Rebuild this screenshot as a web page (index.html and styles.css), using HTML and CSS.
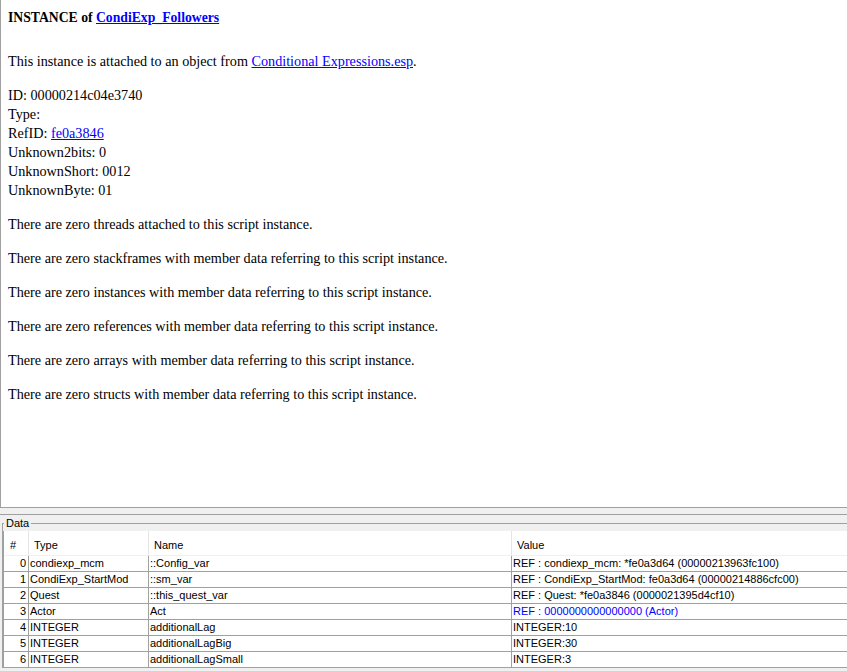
FILE: index.html
```html
<!DOCTYPE html>
<html>
<head>
<meta charset="utf-8">
<title>Instance</title>
<link rel="stylesheet" href="styles.css">
</head>
<body>
<div class="doc">
  <h4 class="title">INSTANCE of <a href="#">CondiExp_Followers</a></h4>
  <p>This instance is attached to an object from <a href="#">Conditional Expressions.esp</a>.</p>
  <p>ID: 00000214c04e3740<br>Type: <br>RefID: <a href="#">fe0a3846</a><br>Unknown2bits: 0<br>UnknownShort: 0012<br>UnknownByte: 01</p>
  <p>There are zero threads attached to this script instance.</p>
  <p>There are zero stackframes with member data referring to this script instance.</p>
  <p>There are zero instances with member data referring to this script instance.</p>
  <p>There are zero references with member data referring to this script instance.</p>
  <p>There are zero arrays with member data referring to this script instance.</p>
  <p>There are zero structs with member data referring to this script instance.</p>
</div>
<div class="split"></div>
<div class="panel">
  <fieldset class="group">
    <legend class="group-label">Data</legend>
    <div class="list">
      <div class="hcell num-h">#</div>
      <div class="hcell">Type</div>
      <div class="hcell">Name</div>
      <div class="hcell last">Value</div>

      <div class="cell num">0</div><div class="cell">condiexp_mcm</div><div class="cell">::Config_var</div><div class="cell last">REF : condiexp_mcm: *fe0a3d64 (00000213963fc100)</div>
      <div class="cell num">1</div><div class="cell">CondiExp_StartMod</div><div class="cell">::sm_var</div><div class="cell last">REF : CondiExp_StartMod: fe0a3d64 (00000214886cfc00)</div>
      <div class="cell num">2</div><div class="cell">Quest</div><div class="cell">::this_quest_var</div><div class="cell last">REF : Quest: *fe0a3846 (0000021395d4cf10)</div>
      <div class="cell num">3</div><div class="cell">Actor</div><div class="cell">Act</div><div class="cell last null">REF : 0000000000000000 (Actor)</div>
      <div class="cell num">4</div><div class="cell">INTEGER</div><div class="cell">additionalLag</div><div class="cell last">INTEGER:10</div>
      <div class="cell num">5</div><div class="cell">INTEGER</div><div class="cell">additionalLagBig</div><div class="cell last">INTEGER:30</div>
      <div class="cell num">6</div><div class="cell">INTEGER</div><div class="cell">additionalLagSmall</div><div class="cell last">INTEGER:3</div>
    </div>
  </fieldset>
</div>
</body>
</html>
```
FILE: styles.css
```css
html, body {
  margin: 0;
  padding: 0;
}
body {
  width: 847px;
  height: 671px;
  overflow: hidden;
  background: #f0f0f0;
  font-family: "Liberation Serif", "Times New Roman", serif;
}
.doc {
  box-sizing: border-box;
  height: 508px;
  background: #ffffff;
  border-left: 1px solid #a0a0a0;
  border-bottom: 1px solid #a0a0a0;
  padding: 8px 7px 0;
  font-size: 14.2px;
  line-height: 19px;
  color: #000;
  overflow: hidden;
}
.title {
  margin: 0 0 25px;
  font-size: 13.7px;
  font-weight: bold;
}
.doc p {
  margin: 0 0 15px;
}
.doc a {
  color: #0000ff;
  text-decoration: underline;
}
.split {
  height: 6px;
  border-bottom: 1px solid #a0a0a0;
}
.panel {
  padding: 2px 0 0 2px;
}
.group {
  margin: 0;
  padding: 0;
  min-width: 0;
  border: 1px solid #a0a0a0;
  border-right: none;
  border-bottom: none;
}
.group-label {
  font-family: "Liberation Sans", Arial, sans-serif;
  font-size: 11px;
  line-height: 13px;
  padding: 0 2px;
  margin-left: 1px;
  color: #000;
}
.list {
  margin-top: 1px;
  background: #ffffff;
  border-left: 1px solid #a0a0a0;
  display: grid;
  grid-template-columns: 25px 120px 363px 1fr;
  font-family: "Liberation Sans", Arial, sans-serif;
  font-size: 11px;
  color: #000;
}
.hcell {
  box-sizing: border-box;
  height: 25px;
  padding: 7px 0 0 5px;
  line-height: 14px;
  border-right: 1px solid #e5e5e5;
  border-bottom: 1px solid #f0f0f0;
  white-space: nowrap;
}
.num-h {
  padding-left: 6px;
}
.cell {
  box-sizing: border-box;
  height: 16px;
  line-height: 15px;
  padding-left: 1px;
  border-right: 1px solid #a0a0a0;
  border-bottom: 1px solid #a0a0a0;
  white-space: nowrap;
  overflow: hidden;
}
.num {
  text-align: right;
  padding: 0 2px 0 0;
}
.last {
  border-right: none;
}
.null {
  color: #0000ff;
}
```
